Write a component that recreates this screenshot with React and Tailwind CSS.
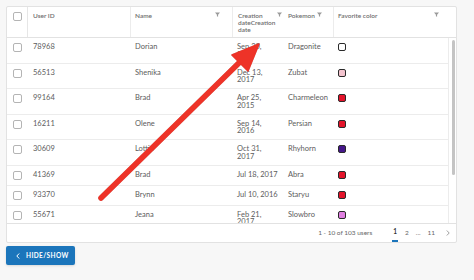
import React from 'react';

const rows = [
  { id: '78968', name: 'Dorian', date: ['Sep 20,', '2017'], pokemon: 'Dragonite', color: '#ffffff' },
  { id: '56513', name: 'Shenika', date: ['Dec 13,', '2017'], pokemon: 'Zubat', color: '#f4c4cf' },
  { id: '99164', name: 'Brad', date: ['Apr 25,', '2015'], pokemon: 'Charmeleon', color: '#e3132a' },
  { id: '16211', name: 'Olene', date: ['Sep 14,', '2016'], pokemon: 'Persian', color: '#e3132a' },
  { id: '30609', name: 'Lottie', date: ['Oct 31,', '2017'], pokemon: 'Rhyhorn', color: '#45178a' },
  { id: '41369', name: 'Brad', date: ['Jul 18, 2017'], pokemon: 'Abra', color: '#e3132a' },
  { id: '93370', name: 'Brynn', date: ['Jul 10, 2016'], pokemon: 'Staryu', color: '#e3132a' },
  { id: '55671', name: 'Jeana', date: ['Feb 21,', '2017'], pokemon: 'Slowbro', color: '#df7fe0' },
];

function FilterIcon() {
  return (
    <svg width="5" height="5" viewBox="0 0 6 6" className="shrink-0">
      <path d="M0 0.5h6L3.7 3.2V5.8L2.3 5V3.2z" fill="#9a9a9a" />
    </svg>
  );
}

function Checkbox() {
  return <div className="w-[9px] h-[9px] border border-[#b4b4b4] rounded-[2px] bg-white" />;
}

function Arrow() {
  return (
    <svg width="474" height="280" className="absolute inset-0 pointer-events-none" style={{ filter: 'drop-shadow(0.5px 0.5px 0.6px rgba(0,0,0,0.25))' }}>
      <line x1="101" y1="198" x2="243" y2="59" stroke="#ee3328" strokeWidth="5.5" strokeLinecap="round" />
      <polygon points="259,44 232,55 248,71" fill="#ee3328" stroke="#ee3328" strokeWidth="1.5" strokeLinejoin="round" />
    </svg>
  );
}

export default function App() {
  return (
    <div className="relative w-[474px] h-[280px] bg-[#f7f7f7] pt-[6px] pl-[6px] overflow-hidden" style={{ fontFamily: 'Lato, "Open Sans", sans-serif' }}>
      <div className="w-[451px] h-[237px] bg-white border border-[#e2e2e2] rounded-[2px] flex flex-col">
        {/* header */}
        <div className="h-[31px] flex border-b border-[#e2e2e2] text-[6.5px] font-semibold text-[#6e6e6e] leading-[7px] shrink-0">
          <div className="w-[21px] border-r border-[#e6e6e6] flex justify-center pt-[5px]">
            <Checkbox />
          </div>
          <div className="w-[103px] pl-[5px] pt-[5px] border-r border-[#ececec]">User ID</div>
          <div className="w-[102px] pl-[4px] pr-[12px] pt-[5px] flex justify-between border-r border-[#ececec]">
            <span>Name</span>
            <FilterIcon />
          </div>
          <div className="w-[51px] pl-[5px] pr-[2px] pt-[5px] flex justify-between">
            <span>Creation<br />dateCreation<br />date</span>
            <FilterIcon />
          </div>
          <div className="w-[50px] pl-[4px] pr-[11px] pt-[5px] flex justify-between border-r border-[#ececec]">
            <span>Pokemon</span>
            <FilterIcon />
          </div>
          <div className="flex-1 pl-[4px] pr-[17px] pt-[5px] flex justify-between">
            <span>Favorite color</span>
            <FilterIcon />
          </div>
        </div>

        {/* body */}
        <div className="h-[185px] flex shrink-0 overflow-hidden">
          <div className="flex-1 overflow-hidden text-[7.5px] text-[#5c5c5c] leading-[7.75px]">
            {rows.map((r) => (
              <div key={r.id} className="min-h-[20px] flex items-start border-b border-[#ececec] pt-[5px] pb-[4px]">
                <div className="w-[21px] flex justify-center">
                  <Checkbox />
                </div>
                <div className="w-[103px] pl-[5px]">{r.id}</div>
                <div className="w-[102px] pl-[4px]">{r.name}</div>
                <div className="w-[51px] pl-[4px] whitespace-nowrap">
                  {r.date.map((d) => (
                    <div key={d}>{d}</div>
                  ))}
                </div>
                <div className="w-[50px] pl-[4px]">{r.pokemon}</div>
                <div className="flex-1 pl-[4px]">
                  <div className="w-[8px] h-[8px] rounded-[2px] border border-[#2a2a2a]" style={{ backgroundColor: r.color }} />
                </div>
              </div>
            ))}
          </div>
          <div className="w-[8px] border-l border-[#ececec] pl-[3px] pt-[2px]">
            <div className="w-[3px] h-[135px] rounded-full bg-[#c4c4c4]" />
          </div>
        </div>

        {/* footer */}
        <div className="h-[19px] border-t border-[#e2e2e2] flex items-stretch justify-end pr-[6px] text-[6.5px] text-[#666666] shrink-0">
          <div className="flex items-center mr-[20px]">1 - 10 of 103 users</div>
          <div className="flex items-stretch gap-[7px]">
            <div className="flex items-center border-b-2 border-[#1b75bb] px-[1px] text-[#333333] font-bold">1</div>
            <div className="flex items-center">2</div>
            <div className="flex items-center">...</div>
            <div className="flex items-center">11</div>
            <div className="flex items-center ml-[4px]">
              <svg width="4" height="6" viewBox="0 0 4 6">
                <path d="M0.8 0.5L3.2 3L0.8 5.5" fill="none" stroke="#888" strokeWidth="0.8" />
              </svg>
            </div>
          </div>
        </div>
      </div>

      {/* button */}
      <button className="mt-[3px] w-[69px] h-[19px] bg-[#1b75bb] rounded-[2px] shadow-sm flex items-center pl-[10px] gap-[6px] text-white text-[6.5px] font-bold tracking-[0.06em]">
        <svg width="4" height="6" viewBox="0 0 4 6">
          <path d="M3.2 0.5L0.8 3L3.2 5.5" fill="none" stroke="#fff" strokeWidth="1" />
        </svg>
        <span>HIDE/SHOW</span>
      </button>

      <Arrow />
    </div>
  );
}
